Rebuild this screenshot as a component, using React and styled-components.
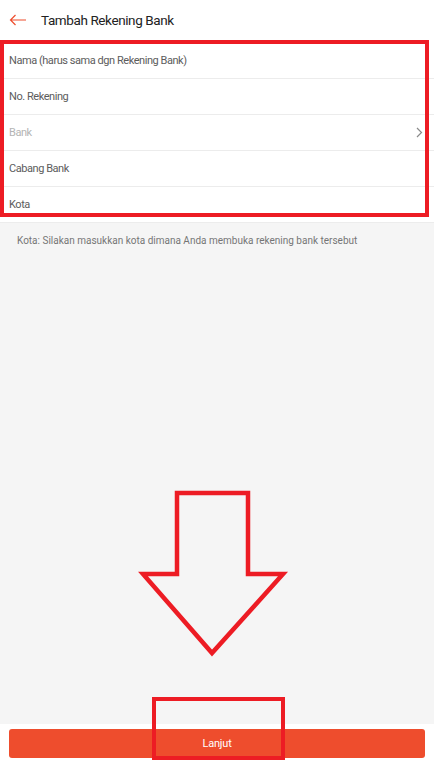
import React from "react";
import styled, { createGlobalStyle } from "styled-components";

const GlobalStyle = createGlobalStyle`
  html, body {
    margin: 0;
    padding: 0;
    background: #f5f5f5;
  }
  * {
    box-sizing: border-box;
  }
`;

const sans = `Roboto, "Noto Sans", sans-serif`;

const Page = styled.div`
  position: relative;
  width: 434px;
  height: 767px;
  display: flex;
  flex-direction: column;
  background: #f5f5f5;
  font-family: ${sans};
  overflow: hidden;
`;

const Header = styled.header`
  height: 42px;
  display: flex;
  align-items: center;
  gap: 14px;
  padding: 0 9px 2px;
  background: #fff;
`;

const BackButton = styled.button`
  display: flex;
  align-items: center;
  padding: 0;
  border: 0;
  background: none;
  color: #ee4d2d;
`;

const Title = styled.h1`
  margin: 0;
  font-size: 13.5px;
  font-weight: 400;
  letter-spacing: -0.4px;
  color: #222;
`;

const FieldList = styled.div`
  background: #fff;
  border-bottom: 1px solid #ececec;
`;

const FieldRow = styled.div`
  height: 36px;
  display: flex;
  align-items: center;
  justify-content: space-between;
  padding: 0 11px 0 9px;
  border-top: ${(p) => (p.$first ? "none" : "1px solid #ececec")};
  font-size: 11px;
  letter-spacing: -0.45px;
  color: ${(p) => (p.$placeholder ? "#b4b4b4" : "#5c5c5c")};
`;

const Hint = styled.p`
  margin: 0;
  padding: 12px 17px;
  font-size: 10px;
  color: #757575;
`;

const Spacer = styled.div`
  flex: 1;
`;

const Footer = styled.footer`
  background: #fff;
  padding: 5px 9px 9px;
`;

const SubmitButton = styled.button`
  width: 100%;
  height: 29px;
  border: 0;
  border-radius: 3px;
  background: #ee4d2d;
  color: #fff;
  font-family: ${sans};
  font-size: 11px;
  letter-spacing: -0.2px;
`;

/* red markup drawn on top of the form */
const Highlight = styled.div`
  position: absolute;
  border: 4.5px solid #ed1c24;
  pointer-events: none;
  left: ${(p) => p.$x}px;
  top: ${(p) => p.$y}px;
  width: ${(p) => p.$w}px;
  height: ${(p) => p.$h}px;
`;

const ArrowMark = styled.svg`
  position: absolute;
  left: 0;
  top: 0;
  pointer-events: none;
`;

const fields = [
  { label: "Nama (harus sama dgn Rekening Bank)" },
  { label: "No. Rekening" },
  { label: "Bank", placeholder: true, select: true },
  { label: "Cabang Bank" },
  { label: "Kota" },
];

const Chevron = () => (
  <svg width="7" height="11" viewBox="0 0 7 11">
    <path d="M1 1l4.5 4.5L1 10" fill="none" stroke="#8a8a8a" strokeWidth="1.2" />
  </svg>
);

export default function App() {
  return (
    <>
      <GlobalStyle />
      <Page>
        <Header>
          <BackButton>
            <svg width="18" height="12" viewBox="0 0 18 12">
              <path
                d="M17 6H1.5M6.5 1L1.5 6l5 5"
                fill="none"
                stroke="currentColor"
                strokeWidth="1.2"
              />
            </svg>
          </BackButton>
          <Title>Tambah Rekening Bank</Title>
        </Header>

        <FieldList>
          {fields.map((f, i) => (
            <FieldRow key={f.label} $first={i === 0} $placeholder={f.placeholder}>
              <span>{f.label}</span>
              {f.select && <Chevron />}
            </FieldRow>
          ))}
        </FieldList>

        <Hint>Kota: Silakan masukkan kota dimana Anda membuka rekening bank tersebut</Hint>
        <Spacer />

        <Footer>
          <SubmitButton>Lanjut</SubmitButton>
        </Footer>

        <Highlight $x={0} $y={40} $w={429} $h={177} />
        <Highlight $x={152} $y={697} $w={133} $h={63} />
        <ArrowMark width="434" height="767" viewBox="0 0 434 767">
          <polygon
            points="177,493 248,493 248,574 283,574 212,653 143,574 177,574"
            fill="none"
            stroke="#ed1c24"
            strokeWidth="4.5"
          />
        </ArrowMark>
      </Page>
    </>
  );
}
